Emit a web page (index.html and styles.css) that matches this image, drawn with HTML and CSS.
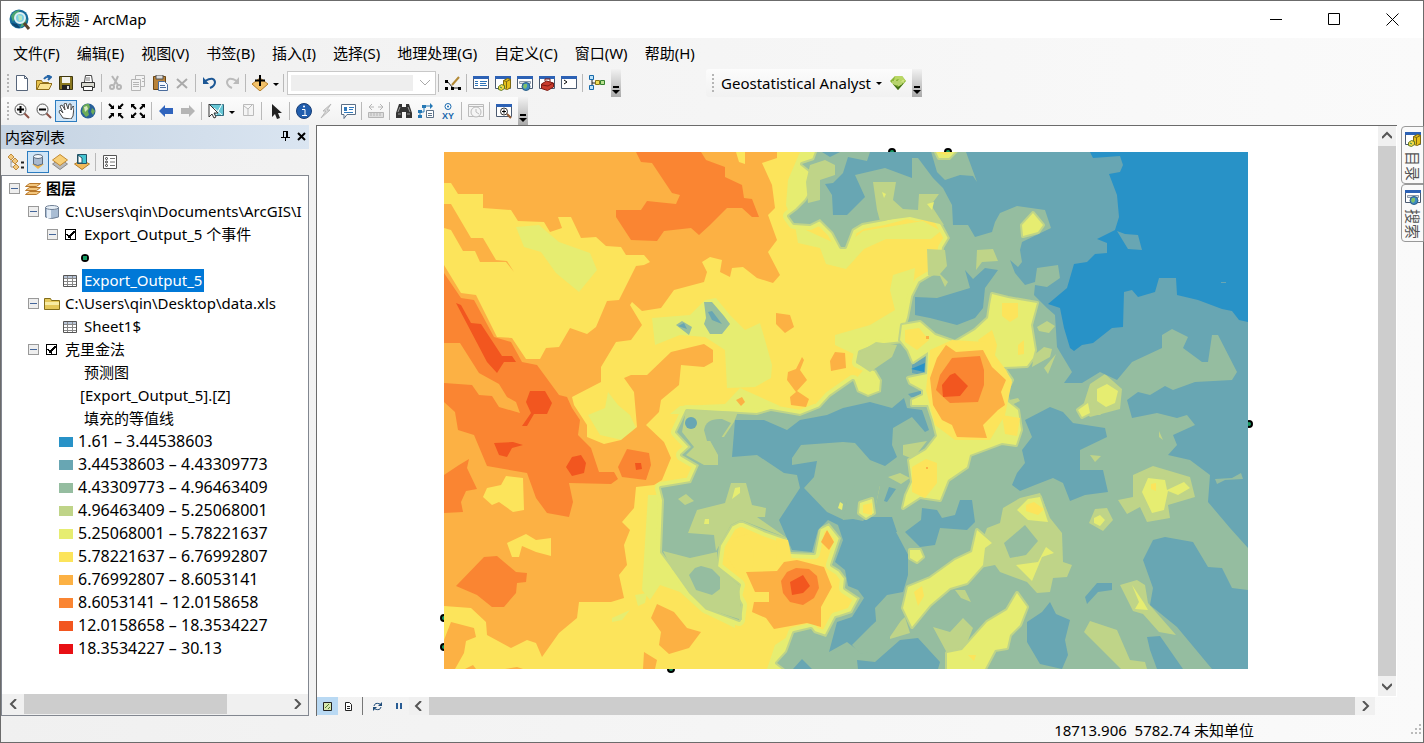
FILE: index.html
```html
<!DOCTYPE html>
<html lang="zh-CN">
<head>
    <meta charset="UTF-8">
    <meta name="viewport" content="width=device-width, initial-scale=1.0">
    <title>无标题 - ArcMap</title>
    <link rel="stylesheet" href="styles.css">
</head>
<body>
    <!-- Shared icons -->
    <svg class="defs" width="0" height="0" aria-hidden="true">
        <symbol id="i-window" viewBox="0 0 16 16">
            <path d="M.5 1.5h15v12H.5z" fill="#fff" stroke="#4b5a70"/>
            <path d="M0 1h16v3H0z" fill="#2d62b5"/>
        </symbol>
        <symbol id="i-catalog" viewBox="0 0 16 16">
            <use href="#i-window"/>
            <path d="M8.500 5.500l4-2 3 1v8l-3 2-4-1z" fill="#e5bf1a" stroke="#7d6710"/>
            <path d="M8.500 5.500l3 1 4-2M11.500 6.500v7" fill="none" stroke="#7d6710"/>
            <path d="M3.500 11.500l3-2 3 1v3l-3 2-3-1z" fill="#f2d94a" stroke="#5f7a24"/>
            <path d="M5 12l2 1" stroke="#2c8a5a"/>
        </symbol>
        <symbol id="i-search" viewBox="0 0 16 16">
            <use href="#i-window"/>
            <path d="M2.500 6.500h11v2h-11z" fill="#dde3ea" stroke="#8c98a8"/>
            <circle cx="9" cy="11.500" r="4" fill="#3d8ac2" stroke="#2c5f86"/>
            <path d="M7 9l3 0 0 3-2 2-2-2z" fill="#7fc06a"/>
        </symbol>
        <symbol id="i-layer" viewBox="0 0 16 16">
            <path d="M8 4l7 5-7 6-7-6z" fill="#f2c169" stroke="#b57d28"/>
        </symbol>
        <symbol id="i-table" viewBox="0 0 14 12">
            <path d="M.5.500h13v11H.500z" fill="#fff" stroke="#555"/>
            <path d="M1 1h12v2H1z" fill="#b8c4d6"/>
            <path d="M1 3.500h12M1 6.500h12M1 9.500h12M4.500 1v10M9.500 1v10" stroke="#888"/>
        </symbol>
        <symbol id="i-more" viewBox="0 0 10 28">
            <path d="M2 18h6" stroke="#000" stroke-width="2"/>
            <path d="M1 21h8l-4 4z"/>
        </symbol>
    </svg>

    <div class="window">
        <!-- Title bar -->
        <header class="title-bar">
            <svg class="app-icon" width="22" height="22" viewBox="0 0 22 22">
                <circle cx="10" cy="10" r="9.500" fill="#176c9c"/>
                <path d="M2 7q3-6 9-6l-2 4-3 3-2 5zM13 13l5-3-2 6-5 3z" fill="#4ba572"/>
                <path d="M2 14q4 5 9 5l-3-4z" fill="#0d4470"/>
                <circle cx="11" cy="9" r="5" fill="#7fd0e4" stroke="#dff0f3" stroke-width="2"/>
                <path d="M9 6l4 1 0 4-3 1z" fill="#b9e6c0"/>
                <path d="M15 14l5 6" stroke="#59422c" stroke-width="3"/>
            </svg>
            <h1>无标题 - ArcMap</h1>
            <div class="window-buttons">
                <button aria-label="最小化"><svg width="13" height="13" viewBox="0 0 13 13"><path d="M0 6.500h12"/></svg></button>
                <button aria-label="最大化"><svg width="13" height="13" viewBox="0 0 13 13"><path d="M.500.500h11v11H.500z"/></svg></button>
                <button aria-label="关闭"><svg width="13" height="13" viewBox="0 0 13 13"><path d="M.500.500l12 12M12.500.500l-12 12"/></svg></button>
            </div>
        </header>

        <!-- Menu -->
        <nav class="menu-bar">
            <button>文件(F)</button>
            <button>编辑(E)</button>
            <button>视图(V)</button>
            <button>书签(B)</button>
            <button>插入(I)</button>
            <button>选择(S)</button>
            <button>地理处理(G)</button>
            <button>自定义(C)</button>
            <button>窗口(W)</button>
            <button>帮助(H)</button>
        </nav>

        <!-- Toolbars -->
        <div class="toolbar-row">
            <div class="toolbar standard">
                <span class="grip"></span>
                <button class="tool" aria-label="新建"><svg viewBox="0 0 16 16"><path d="M2.500.500h8l3 3v12h-11z" fill="#fff" stroke="#56657a"/><path d="M10.500.500v3h3" fill="none" stroke="#56657a"/></svg></button>
                <button class="tool" aria-label="打开"><svg viewBox="0 0 16 16"><path d="M.500 14.500v-9h5l1 2h6v7z" fill="#e8c24c" stroke="#8e6d19"/><path d="M1 14.500l3-6h12l-3 6z" fill="#fae391" stroke="#8e6d19"/><path d="M8 4q2-3 5-2M11 0l4 2-3 3" fill="none" stroke="#2465a8" stroke-width="2"/></svg></button>
                <button class="tool" aria-label="保存"><svg viewBox="0 0 16 16"><path d="M1.500 1.500h13v13h-13z" fill="#8a7820" stroke="#40380f"/><path d="M4 2h8v6H4z" fill="#f4f4ee"/><path d="M4 10h8v5H4z" fill="#222"/><path d="M9 11h2v3H9z" fill="#ddd"/></svg></button>
                <button class="tool" aria-label="打印"><svg viewBox="0 0 16 16"><path d="M4.500 7l1-6.500h6l1 6.500" fill="#fff" stroke="#444"/><path d="M1.500 7.500h13v5h-13z" fill="#d9d9d0" stroke="#333"/><path d="M3.500 11.500h9v4h-9z" fill="#fff" stroke="#333"/><path d="M6 3h4M6 5h4" stroke="#777"/></svg></button>
                <span class="separator"></span>
                <button class="tool" aria-label="剪切" disabled><svg viewBox="0 0 16 16"><g fill="none" stroke="#b5b5b5" stroke-width="2"><path d="M4 1l6 9M10 1l-4 9"/><circle cx="4" cy="12" r="2"/><circle cx="11" cy="12" r="2"/></g></svg></button>
                <button class="tool" aria-label="复制" disabled><svg viewBox="0 0 16 16"><g fill="#f3f3f3" stroke="#b5b5b5"><path d="M5.500.500h9v11h-9z"/><path d="M1.500 4.500h9v11h-9z"/><path d="M3 7.500h6M3 9.500h6M3 11.500h6M12 3.500h2M12 6.500h2"/></g></svg></button>
                <button class="tool" aria-label="粘贴"><svg viewBox="0 0 16 16"><path d="M1.500 1.500h12v13h-12z" fill="#b98238" stroke="#6b4716"/><path d="M4 0h7v4H4z" fill="#dcdcdc" stroke="#555"/><path d="M6.500 6.500h6l3 3v6h-9z" fill="#f4f8ff" stroke="#4a6c9c"/><path d="M8 10.500h5M8 12.500h6" stroke="#4a6c9c"/></svg></button>
                <button class="tool" aria-label="删除" disabled><svg viewBox="0 0 16 16"><path d="M3 4l10 9M13 4L3 13" stroke="#aaa" stroke-width="2"/></svg></button>
                <span class="separator"></span>
                <button class="tool" aria-label="撤消"><svg viewBox="0 0 16 16"><path d="M3 6q9-5 10 1 0 4-5 6" fill="none" stroke="#1c5795" stroke-width="2"/><path d="M1 2v7h6z" fill="#1c5795"/></svg></button>
                <button class="tool" aria-label="恢复" disabled><svg viewBox="0 0 16 16"><path d="M13 6q-9-5-10 1 0 4 5 6" fill="none" stroke="#bbb" stroke-width="2"/><path d="M15 2v7H9z" fill="#bbb"/></svg></button>
                <span class="separator"></span>
                <button class="tool" aria-label="添加数据"><svg viewBox="0 0 16 16"><path d="M8 3l8 6-8 7-8-7z" fill="#f2c169" stroke="#b57d28"/><path d="M8 0v11M3 5.500h10" stroke="#000" stroke-width="2"/></svg></button>
                <button class="drop" aria-label="添加数据选项"></button>
                <span class="separator"></span>
                <select class="scale" aria-label="地图比例" disabled><option></option></select>
                <span class="separator"></span>
                <button class="tool" aria-label="编辑器"><svg viewBox="0 0 16 16"><path d="M2 6l6 7h6" fill="none" stroke="#222"/><path d="M7 10L14 2" stroke="#b38a36" stroke-width="2"/><path d="M0 5h3v3H0zM0 12h3v3H0zM6 12h3v3H6zM13 12h3v3h-3z"/></svg></button>
                <span class="separator"></span>
                <button class="tool" aria-label="内容列表"><svg viewBox="0 0 16 16"><use href="#i-window"/><path d="M2 6.500h3M2 8.500h3M2 10.500h3M7 6.500h7M7 8.500h6M7 10.500h7" stroke="#2d73b8"/></svg></button>
                <button class="tool" aria-label="目录"><svg viewBox="0 0 16 16"><use href="#i-catalog"/></svg></button>
                <button class="tool" aria-label="搜索"><svg viewBox="0 0 16 16"><use href="#i-search"/></svg></button>
                <button class="tool" aria-label="工具箱"><svg viewBox="0 0 16 16"><use href="#i-window"/><path d="M2.500 9l5-3 7 2v4l-6 3.500-6-2z" fill="#c93a2b" stroke="#7c1912"/><path d="M6 6V4h5v3M3 10l6 1 5-3" fill="none" stroke="#7c1912"/></svg></button>
                <button class="tool" aria-label="Python"><svg viewBox="0 0 16 16"><use href="#i-window"/><path d="M3 5l3 2-3 2" fill="none" stroke="#000"/></svg></button>
                <span class="separator"></span>
                <button class="tool" aria-label="模型构建器"><svg viewBox="0 0 16 16"><path d="M3 3v10M3 8h11" stroke="#222"/><g stroke-width="1"><path d="M.500.500h4v4h-4zM.500 10.500h4v4h-4z" fill="#bde3fb" stroke="#1769a8"/><path d="M6.500 5.500h4v4h-4z" fill="#f1df58" stroke="#867415"/><path d="M11.500 5.500h4v4h-4z" fill="#b8e08e" stroke="#34812d"/></g></svg></button>
                <button class="overflow" aria-label="工具栏选项"><svg viewBox="0 0 10 28"><use href="#i-more"/></svg></button>
            </div>
            <div class="toolbar analyst">
                <span class="grip"></span>
                <button class="text-tool">Geostatistical Analyst<span class="caret"></span></button>
                <button class="tool" aria-label="地统计向导"><svg viewBox="0 0 16 16"><path d="M0 6l5-5h7l4 5-8 9z" fill="#8bb63a"/><path d="M5 1h7l4 5-4 1-4-3-4 2z" fill="#b9d765"/><path d="M3 6v3M5 5v5M7 6v4M9 5v6M11 6v4M13 5v3" stroke="#e4f1a0"/><path d="M3 9l5 6 6-7-6 4z" fill="#406d18"/></svg></button>
                <button class="overflow" aria-label="工具栏选项"><svg viewBox="0 0 10 28"><use href="#i-more"/></svg></button>
            </div>
        </div>
        <div class="toolbar-row">
            <div class="toolbar">
                <span class="grip"></span>
                <button class="tool" aria-label="放大"><svg viewBox="0 0 16 16"><path d="M10 10l5 5" stroke="#8d5145" stroke-width="2"/><circle cx="6.500" cy="6.500" r="5.500" fill="#f7f7f7" stroke="#555"/><path d="M3 6.500h7M6.500 3v7" stroke="#000" stroke-width="2"/></svg></button>
                <button class="tool" aria-label="缩小"><svg viewBox="0 0 16 16"><path d="M10 10l5 5" stroke="#8d5145" stroke-width="2"/><circle cx="6.500" cy="6.500" r="5.500" fill="#f7f7f7" stroke="#555"/><path d="M3 6.500h7" stroke="#000" stroke-width="2"/></svg></button>
                <button class="tool active" aria-label="平移"><svg viewBox="0 0 16 16"><path d="M5 15L1 9l1-2 3 3-3-7 2-1 3 5-1-6 2-1 2 6 1-5 2 0 0 6 2-4 1 1-1 9-2 3z" fill="#fff" stroke="#4b4b4b"/></svg></button>
                <button class="tool" aria-label="全图"><svg viewBox="0 0 16 16"><circle cx="8" cy="8" r="7.500" fill="#28609a"/><path d="M3 3q3-3 6-2l1 3-2 4 1 4-3 2-4-5z" fill="#6cab58"/><path d="M12 5l3 3-2 4-2-3z" fill="#6cab58"/><path d="M4 4l3-1 1 3-3 3z" fill="#d7e9bd"/></svg></button>
                <span class="separator"></span>
                <button class="tool" aria-label="固定比例放大"><svg viewBox="0 0 16 16"><path d="M1 1l4 4M15 1l-4 4M1 15l4-4M15 15l-4-4" stroke="#000" stroke-width="2"/><path d="M6 2v4H2zM10 2v4h4zM6 14v-4H2zM10 14v-4h4z"/></svg></button>
                <button class="tool" aria-label="固定比例缩小"><svg viewBox="0 0 16 16"><path d="M2 2l4 4M14 2l-4 4M2 14l4-4M14 14l-4-4" stroke="#000" stroke-width="2"/><path d="M1 5V1h4zM15 5V1h-4zM1 11v4h4zM15 11v4h-4z"/></svg></button>
                <span class="separator"></span>
                <button class="tool" aria-label="返回"><svg viewBox="0 0 16 16"><path d="M1 8l6-6v3h8v6H7v3z" fill="#3064bd"/></svg></button>
                <button class="tool" aria-label="前进" disabled><svg viewBox="0 0 16 16"><path d="M15 8L9 2v3H1v6h8v3z" fill="#b5b5b5"/></svg></button>
                <span class="separator"></span>
                <button class="tool" aria-label="选择要素"><svg viewBox="0 0 16 16"><path d="M1.500 1.500h14v11h-9z" fill="#67c7d6" stroke="#31677a"/><path d="M8 12l6-11M6 5l8 7" stroke="#fff"/><path d="M1 1v13l3-3 2 4 2-1-2-4h4z" fill="#fff" stroke="#333"/></svg></button>
                <button class="drop" aria-label="选择选项"></button>
                <button class="tool" aria-label="清除选择" disabled><svg viewBox="0 0 16 16"><path d="M3.500 1.500h10v11h-10zM4 3l4 3 4-4M8 6v6" fill="#f4f4f4" stroke="#bbb"/></svg></button>
                <span class="separator"></span>
                <button class="tool" aria-label="选择元素"><svg viewBox="0 0 16 16"><path d="M4 1v13l3-3 2 5 3-1-2-5h4z" fill="#222"/></svg></button>
                <span class="separator"></span>
                <button class="tool" aria-label="识别"><svg viewBox="0 0 16 16"><circle cx="8" cy="8" r="7.500" fill="#215eae" stroke="#173d75"/><path d="M6 6.500h3V12M6 12.500h5" fill="none" stroke="#fff"/><circle cx="8" cy="3.500" r="1" fill="#fff"/></svg></button>
                <button class="tool" aria-label="超链接" disabled><svg viewBox="0 0 16 16"><path d="M13 1L5 8l3 0-5 7 9-8H9z" fill="#ddd" stroke="#b8b8b8"/></svg></button>
                <button class="tool" aria-label="HTML 弹出窗口"><svg viewBox="0 0 16 16"><path d="M1.500 1.500h14v10H7l-3 4v-4H1.500z" fill="#fff" stroke="#5a6f87"/><path d="M4 4h3v4H4z" fill="#3079bd"/><path d="M9 4.500h5M9 6.500h4M4 9.500h9" stroke="#3079bd"/></svg></button>
                <span class="separator"></span>
                <button class="tool" aria-label="测量" disabled><svg viewBox="0 0 16 16"><path d="M1 4h5M10 4h5M4 1L1 4l3 3M12 1l3 3-3 3" fill="none" stroke="#b5b5b5"/><path d="M.500 9.500h15v5H.500zM3 10v3M6 10v3M9 10v3M12 10v3" fill="#ddd" stroke="#b5b5b5"/></svg></button>
                <span class="separator"></span>
                <button class="tool" aria-label="查找"><svg viewBox="0 0 16 16"><path d="M3 1h3v3h4V1h3l3 9v5h-6V9H6v6H0v-5z" fill="#343434"/><path d="M2 11h3M11 11h3M4 4l-2 5M12 4l2 5" stroke="#999"/></svg></button>
                <button class="tool" aria-label="查找路径"><svg viewBox="0 0 16 16"><path d="M2 14V9h4V3h8" fill="none" stroke="#2578b5" stroke-width="1"/><path d="M12 0l3 3-3 3M0 12h4v3H0zM0 7h4v3H0zM4 2h4v3H4z" fill="#2578b5"/><path d="M8.500 7.500h7v7h-7z" fill="#fff" stroke="#5c7187"/><path d="M10 10.500h4M10 12.500h4" stroke="#5c7187"/></svg></button>
                <button class="tool" aria-label="转到 XY"><svg viewBox="0 0 16 16"><circle cx="8" cy="3.500" r="3" fill="#fff" stroke="#1767ad"/><circle cx="8" cy="3.500" r="1" fill="#1767ad"/><text class="xy" x="8" y="16">XY</text></svg></button>
                <span class="separator"></span>
                <button class="tool" aria-label="时间滑块" disabled><svg viewBox="0 0 16 16"><g fill="#f5f5f5" stroke="#bbb"><path d="M.500 1.500h15v12H.500zM1 3.500h14"/><circle cx="8" cy="9" r="5"/><path d="M8 6v3l3 2"/></g></svg></button>
                <span class="separator"></span>
                <button class="tool" aria-label="创建查看器窗口"><svg viewBox="0 0 16 16"><use href="#i-window"/><path d="M11 11l4 4" stroke="#915a35" stroke-width="2"/><circle cx="8" cy="8.500" r="3.500" fill="#fff" stroke="#333"/><path d="M6 8.500h4M8 6.500v4" stroke="#000"/></svg></button>
                <button class="overflow" aria-label="工具栏选项"><svg viewBox="0 0 10 28"><use href="#i-more"/></svg></button>
            </div>
        </div>

        <div class="workspace">
            <!-- Table of contents -->
            <aside class="toc">
                <div class="toc-header">
                    <h2>内容列表</h2>
                    <button aria-label="自动隐藏"><svg width="9" height="10" viewBox="0 0 9 10"><path d="M2.500 0v6M2 .500h4M5.500 0v6M6.500 0v6M0 6.500h9M4.500 7v3" stroke="#000" fill="none"/></svg></button>
                    <button aria-label="关闭"><svg width="9" height="9" viewBox="0 0 9 9"><path d="M1 1l7 7M8 1L1 8" stroke="#000" stroke-width="2"/></svg></button>
                </div>
                <div class="toc-tools">
                    <button class="tool" aria-label="按绘制顺序列出"><svg viewBox="0 0 16 16"><path d="M3 4v9h4M3 8h4" fill="none" stroke="#999"/><path d="M0 3l3-3 3 3-3 3zM4 7l3-3 3 3-3 3zM5 13l3-3 3 3-3 3z" fill="#f2c97f" stroke="#c08b3c"/><path d="M13 8.500h3M13 13.500h3" stroke="#222" stroke-width="2"/></svg></button>
                    <button class="tool active" aria-label="按源列出"><svg viewBox="0 0 16 16"><path d="M8 15l-6-5h12z" fill="#edb74f"/><path d="M3.500 2v8q4 3 9 0V2" fill="#a8bad0" stroke="#5d6d80"/><ellipse cx="8" cy="2.500" rx="4.500" ry="2" fill="#f5f8fb" stroke="#5d6d80"/></svg></button>
                    <button class="tool" aria-label="按可见性列出"><svg viewBox="0 0 16 16"><path d="M8 5l7.500 5L8 15.500.500 10z" fill="#b9b9b9" stroke="#888"/><path d="M8 .500L15.500 6 8 11.500.500 6z" fill="#f7cf78" stroke="#c3892f"/></svg></button>
                    <button class="tool" aria-label="按选择列出"><svg viewBox="0 0 16 16"><path d="M8 6l7.500 4L8 15.500.500 10z" fill="#f2b95a" stroke="#b57d28"/><path d="M3.500.500h9v9h-9z" fill="#45c4d1" stroke="#235367"/><path d="M4 1l4 3 0 5H4z" fill="#fff" stroke="#235367"/></svg></button>
                    <span class="separator"></span>
                    <button class="tool" aria-label="选项"><svg viewBox="0 0 16 16"><path d="M1.500 1.500h13v13h-13z" fill="#fff" stroke="#555"/><g fill="none" stroke="#333"><circle cx="4.500" cy="4.500" r="1"/><circle cx="4.500" cy="8" r="1"/><circle cx="4.500" cy="11.500" r="1"/></g><path d="M8 4.500h5M8 8h5M8 11.500h5" stroke="#777"/></svg></button>
                </div>
                <div class="toc-box">
                    <ul class="tree">
                        <li class="level-0"><button class="toggle" aria-label="折叠"></button><svg class="node-icon" viewBox="0 0 16 14"><g fill="#f3c67d" stroke="#b8782b"><path d="M.500 12.500l4-3h11l-4 3z"/><path d="M.500 8.500l4-3h11l-4 3z"/><path d="M.500 4.500l4-3h11l-4 3z"/></g></svg><strong>图层</strong></li>
                        <li class="level-1"><button class="toggle" aria-label="折叠"></button><svg class="node-icon" viewBox="0 0 16 14"><path d="M1.500 2v10q6 3 13 0V2" fill="#a9bdd4" stroke="#718196"/><path d="M3 3h4v10H3z" fill="#e4edf7"/><ellipse cx="8" cy="2.500" rx="6.500" ry="2" fill="#e6eef6" stroke="#718196"/></svg><span>C:\Users\qin\Documents\ArcGIS\I</span></li>
                        <li class="level-2"><button class="toggle" aria-label="折叠"></button><input type="checkbox" id="layer-events" checked><label for="layer-events">Export_Output_5 个事件</label></li>
                        <li class="symbol"><svg width="10" height="10" viewBox="0 0 10 10"><circle cx="5" cy="5" r="4"/><path d="M3 3h4v4H3z" fill="#169b62"/></svg></li>
                        <li class="table-node"><svg viewBox="0 0 14 12"><use href="#i-table"/></svg><span class="selected">Export_Output_5</span></li>
                        <li class="level-1"><button class="toggle" aria-label="折叠"></button><svg class="node-icon" viewBox="0 0 16 14"><path d="M.500 12.500V1.500h6l1 2h8v9z" fill="#e5c85a" stroke="#826d1b"/><path d="M1 5h14v3H1z" fill="#f8eca4"/></svg><span>C:\Users\qin\Desktop\data.xls</span></li>
                        <li class="table-node"><svg viewBox="0 0 14 12"><use href="#i-table"/></svg><span>Sheet1$</span></li>
                        <li class="level-1"><button class="toggle" aria-label="折叠"></button><input type="checkbox" id="layer-kriging" checked><label for="layer-kriging">克里金法</label></li>
                        <li class="caption">预测图</li>
                        <li class="caption field">[Export_Output_5].[Z]</li>
                        <li class="caption">填充的等值线</li>
                        <li class="legend"><i class="swatch c1"></i>1.61 – 3.44538603</li>
                        <li class="legend"><i class="swatch c2"></i>3.44538603 – 4.43309773</li>
                        <li class="legend"><i class="swatch c3"></i>4.43309773 – 4.96463409</li>
                        <li class="legend"><i class="swatch c4"></i>4.96463409 – 5.25068001</li>
                        <li class="legend"><i class="swatch c5"></i>5.25068001 – 5.78221637</li>
                        <li class="legend"><i class="swatch c6"></i>5.78221637 – 6.76992807</li>
                        <li class="legend"><i class="swatch c7"></i>6.76992807 – 8.6053141</li>
                        <li class="legend"><i class="swatch c8"></i>8.6053141 – 12.0158658</li>
                        <li class="legend"><i class="swatch c9"></i>12.0158658 – 18.3534227</li>
                        <li class="legend"><i class="swatch c10"></i>18.3534227 – 30.13</li>
                    </ul>
                    <div class="scrollbar horizontal">
                        <button aria-label="向左"><svg viewBox="0 0 10 10"><path d="M7 0L2 5l5 5"/></svg></button>
                        <div class="track"><div class="thumb toc-thumb"></div></div>
                        <button aria-label="向右"><svg viewBox="0 0 10 10"><path d="M3 0l5 5-5 5"/></svg></button>
                    </div>
                </div>
            </aside>

            <!-- Map view -->
            <main class="map-pane">
                <div class="map-row">
                    <div class="map-view">
                        <svg viewBox="317 126 1059 570" role="img" aria-label="预测图">
                            <!-- sample points that show past the surface -->
                            <g class="points">
                                <circle cx="892" cy="152" r="3"/>
                                <circle cx="948" cy="152" r="3"/>
                                <circle cx="1249" cy="424" r="3"/>
                                <circle cx="444" cy="618" r="3"/>
                                <circle cx="444" cy="647" r="3"/>
                                <circle cx="671" cy="669" r="3"/>
                            </g>
                            <svg x="444" y="152" width="804" height="517" viewBox="444 152 804 517">
                                <path class="k6" d="M444 152h804v517H444z"/>

                                <!-- 5.25 - 5.78, inside the yellow zone -->
                                <g class="k5">
                                    <path d="M652 318L690 315 705 300 716 298 730 315 745 330 760 323 765 340 772 365 771 378 755 387 727 388 725 350 705 337 680 335 655 345z"/>
                                    <path d="M893 275L915 268 909 330 903 345 860 357 835 345 835 335 870 325 895 310 890 290z"/>
                                    <path d="M800 152h20l-5 48-25 15-4-10 2-25z"/>
                                    <path d="M795 225l48 22 20-16 60-10 18 10-10 8-45 0-22 10-18 20-20-5-6-16-22-5z"/>
                                    <path d="M588 415L605 408 608 392 618 405 630 415 636 428 622 440 600 435z"/>
                                    <path d="M648 495L662 495 664 552 680 575 700 600 735 622 735 628 702 612 680 592 660 585 650 600 642 590z"/>
                                    <path d="M612 618l18-8-8 10-10 2zM635 595l12-2-2 10-7 3zM775 645l15-10 4 34h-27z"/>
                                    <path d="M855 380L870 362 884 375 882 398 860 398zM740 388l40 18-50 8-60 0 10-8 45-2z"/>
                                </g>

                                <!-- Cool zone with its edge bands -->
                                <path id="cool" class="k3" d="M817 152L814 160 802 164 812 172 818 182 806 201 797 210 789 216 794 223 810 224 820 219 833 232 841 247 845 247 852 229 862 223 884 219 907 213 918 215 928 203 937 215 943 225 950 238 944 248 940 272 930 277 920 283 913 297 909 318 905 330 904 343 875 346 860 352 858 362 876 370 882 380 881 392 868 397 857 392 853 381 830 397 820 408 800 416 771 411 757 415 687 411 677 432 691 447 682 455 699 465 691 483 661 488 664 500 662 552 674 568 687 562 681 575 691 592 707 608 739 620 741 605 736 596 739 585 716 567 719 545 731 525 741 520 764 530 787 538 791 552 814 553 819 528 829 523 841 538 832 565 840 570 846 578 845 588 860 598 852 613 840 617 836 618 826 637 814 633 811 629 794 633 787 652 777 663 785 669 785 680 1258 680V142H817z"/>
                                <use class="band-outer" href="#cool"/>
                                <use class="band-inner" href="#cool"/>

                                <!-- 4.96 - 5.25 -->
                                <g class="k4">
                                    <path d="M810 165L825 160 835 165 835 175 820 180 820 200 808 203 806 182z"/>
                                    <path d="M873 182h23l-3 18 10 9 15 1 1-16h20l-8 11 13 20-34-8-30 4-3-11z"/>
                                    <path d="M927 249l18 1 2 16-7 8 8 8-3 5-5-11-12-1z"/>
                                    <path d="M858 353l18-11 21 3-5 12-22 15-12-8z"/>
                                    <path d="M686 410l52 2-4 10-10 15-16 0 10 18v10l-14 0-18-10 8-8-12-15z"/>
                                    <path d="M688 533L697 510 725 503 731 483 746 483 752 505 766 508 765 517 757 517 787 538 741 520 731 525 716 551 714 535z"/>
                                    <path d="M663 551L690 558 717 552 718 567 739 585 742 620 707 609 689 593 672 569z"/>
                                    <path d="M1133 475L1153 466 1190 477 1195 497 1168 505 1170 518 1147 522 1140 507 1127 514 1118 500 1133 497z"/>
                                    <path d="M1095 509l12-1 6 12-10 11-14-8z"/>
                                    <path d="M1003 508L1020 498 1040 493 1050 518 1062 533 1063 562 1072 565 1067 577 1053 578 1050 592 1037 593 1027 582 1000 572 995 565 980 568 975 560 987 528 1000 523z"/>
                                    <path d="M933 627l17 5 13-14 10 10-8 20-18 5zM905 617l-15 14v8l20-6zM955 590l10 0 6 12-10-4zM903 445l24-4-14 18-10-4z"/>
                                    <path d="M1090 621l27 9 13 30 15 2 2 7-26 0-25-25-12-12z"/>
                                    <path d="M1120 585l17-5 8 5 3 18 28 32-17-3-16-18-10-3z"/>
                                    <path d="M1090 384l15-10 17 15-2 20-30 8-8-8zM1056 354l-8 20-4-6zM1037 327l10-6 8 5-6 7-10-2zM1034 355l10-8 8 2-2 8-18 10z"/>
                                    <path d="M1018 152h9v8zM977 250l16-1 5 12-16 1-6 8zM888 477l12-4 10 5-9 6zM678 499l8-5 8 7-9 4zM863 490l17-4-4 18-14 4zM1007 407l13-6-2-3-13 3zM1080 415l30-8-10 8zM1090 455l11 1-6 6zM1159 431l4 9-4-3z"/>
                                </g>

                                <!-- 4.43 - 4.96, lakes inside the olive bands -->
                                <g class="k3">
                                    <path d="M704 430q2-12 18-11l9 4-12 18-12 0z"/>
                                    <path d="M689 575L695 568 701 566 712 569 720 577 720 589 712 595 696 590z"/>
                                    <path d="M1004 543L1025 525 1038 541 1026 555 1010 558z"/>
                                    <path d="M704 302l8 0 12 14 6 8-8 10-12 0-6-10 2-6zM676 325l6-4 10 6-3 8z"/>
                                </g>

                                <!-- 3.45 - 4.43 -->
                                <g class="k2">
                                    <path d="M848 157L867 161 870 152H1248V548L1230 528 1208 502 1210 475 1190 460 1168 455 1177 445 1173 435 1195 425 1187 415 1177 418 1157 413 1132 418 1127 400 1138 392 1150 395 1165 386 1173 390 1195 382 1232 380 1237 372 1218 335 1212 335 1208 362 1202 362 1183 348 1188 337 1172 329 1162 335 1162 348 1132 362 1117 380 1100 372 1082 383 1064 383 1072 372 1057 347 1055 315 1047 308 1034 295 1035 285 1047 287 1060 278 1058 265 1037 268 1035 282 1025 285 1015 273 1010 260 1018 267 1022 262 1020 250 1022 242 1051 228 1045 210 1017 206 1000 213 995 222 992 232 975 237 968 225 953 225 952 205 943 188 933 178 918 158 912 158 912 178 885 168 855 175 865 197 847 215 833 215 832 195 825 184 833 183 843 173z"/>
                                    <path d="M915 297L937 298 970 288 965 270 973 279 985 268 998 270 985 288 983 308 975 318 957 325 930 318 915 315z"/>
                                    <path d="M735 420L764 420 787 430 800 420 827 415 843 408 870 402 892 408 904 398 907 408 922 410 929 430 925 432 912 417 893 428 892 445 897 457 885 466 870 460 855 443 843 442 801 445 792 458 792 465 817 461 814 477 804 488 827 512 844 520 847 502 852 517 892 517 897 532 908 545 908 575 903 592 887 595 875 608 877 632 860 652 847 642 829 652 837 622 852 617 864 598 858 590 848 586 845 570 835 562 843 540 838 525 828 520 818 530 812 552 792 550 779 520 800 488 797 475 784 473 757 455 732 457z"/>
                                    <path d="M857 660L875 662 900 640 918 638 940 662 938 669 858 669z"/>
                                    <path d="M1025 420L1050 407 1063 412 1073 423 1105 428 1107 437 1080 450 1080 470 1103 470 1108 492 1085 495 1070 501 1063 483 1053 478 1035 485 1020 491 1012 485 1017 473 1025 463 1022 450 1032 437z"/>
                                    <path d="M922 508L937 510 942 518 955 515 960 500 972 500 975 522 967 530 940 528 935 545 920 547 905 532 921 520z"/>
                                    <path d="M1153 540L1165 537 1193 542 1208 567 1222 568 1232 588 1248 590V669H1212L1177 627 1150 605 1153 588 1143 560z"/>
                                    <path d="M1147 637L1160 636 1183 669H1157L1150 650z"/>
                                    <path d="M1050 602L1056 614 1070 620 1065 640 1068 655 1062 669 1040 664 1027 642 1027 622 1042 612z"/>
                                    <path d="M1097 583h15v7l-14 2-11 12-2-7zM884 501l5-14 7 2-9 13zM793 669l9-10 10 10zM822 152h18l-10 5zM912 365l14-9v20l-14-3zM908 394l16-4 1 8-14-1z"/>
                                    <circle cx="691" cy="423" r="6"/>
                                    <path d="M708 312l4-1 10 13-10-4zM678 326l6-3 3 6z"/>
                                </g>
                                <g class="k3">
                                    <path d="M930 148L937 172 945 180 960 175 973 176 977 182 966 152z"/>
                                    <path d="M1215 479l17-1 9-5 2 6-18 1-8 4z"/>
                                    <path d="M843 520l4-20 8-15 25 0-5 24-12 12-10-2z"/>
                                    <path d="M852 645l20-20 30-28 12 4-20 30-14 20-20 3zM896 532l8 0 12 14 12 6-3 12-12 0z"/>
                                </g>

                                <!-- Warm islands inside the cool zone -->
                                <g class="island">
                                    <path d="M992 294L1008 298 1037 303 1031 325 1035 350 1033 358 1027 366 1003 367 1012 380 1006 392 1008 402 1018 410 1021 430 1016 445 1002 443 970 455 967 467 948 480 940 500 920 497 903 508 906 495 912 482 909 460 926 450 937 436 933 420 928 405 912 405 912 400 923 395 923 390 910 383 908 378 927 374 928 352 913 362 908 350 900 340 902 325 920 322 935 335 955 342 975 330 988 318 990 305z"/>
                                    <path d="M1022 225L1033 213 1043 225 1038 232 1023 236z"/>
                                    <path d="M1097 389L1107 384 1118 391 1115 403 1106 407 1097 401zM1078 410l10-7 2 10-8 4z"/>
                                    <path d="M977 530L992 543 985 548 983 565 967 583 950 588 930 605 912 627 903 608 908 587 930 578 955 560 972 552z"/>
                                    <path d="M1017 593L1027 607 1020 625 1010 635 1007 648 995 650 985 669 947 669 947 653 962 650 987 622 1007 610z"/>
                                    <path d="M1017 510L1028 499 1040 497 1048 522 1028 520z"/>
                                    <path d="M1142 492L1148 478 1165 480 1167 490 1184 482 1190 488 1178 495 1168 491 1164 510 1152 513z"/>
                                    <path d="M860 503l12-4 2 14-8 5-7-5zM910 550l10 0 3 7-6 5-7-4zM935 150h22l-8 8h-10zM1094 518l6-3 5 5-5 6-6-3z"/>
                                </g>
                                <g class="k5">
                                    <path d="M1016 565l22-3 8-15 8 6-12 4-10 24zM1132 585l12 18 4 7-13-1 4-7zM735 488l5-1 0 6-8 6zM705 519l4 0 0 5-5 0zM882 192l4 2-2 4zM840 502l3 2-1 6-4-2zM1183 648l3 0zM927 204l7-2-2 8z"/>
                                </g>
                                <g class="k6">
                                    <path d="M1002 303h16v14l-8 5-8-6zM978 340l14-10 5 15-3 15-10-8zM1018 345l6-5 0 14-6 1zM905 330l14-2 10 12-12 10-12-8zM912 467l14-8 11 4 0 20-12 15-13-6zM1002 415l18 3-3 18-12-2zM863 505l9-2 0 12-9-2zM914 592l8-6 2 10-6 10zM1026 505l8-3 10 7-6 6-12-4zM1151 484l5-1v8l-5-2zM936 152h16l-6 3zM968 655l8 0-2 6z"/>
                                    <path d="M930 350L952 340 985 342 1006 370 1012 382 1008 400 1005 415 990 440 955 440 935 425 926 390z"/>
                                    <path d="M734 538l14-4 6 20-2 20-15-2-10-15zM776 538l12 2 4 20-15 0z"/>
                                </g>

                                <!-- 6.77 - 8.61 -->
                                <g class="k7">
                                    <path d="M444 152L777 152 777 158 762 163 772 185 775 208 768 215 777 240 768 252 780 275 773 283 757 278 743 267 732 268 730 277 720 272 722 260 710 257 702 262 707 272 704 282 674 290 661 308 642 311 632 302 630 305 642 325 631 340 616 342 601 367 601 382 572 397 574 405 587 425 587 437 604 444 621 440 637 427 634 392 624 378 631 375 647 375 671 352 704 344 713 350 713 362 704 367 681 365 679 385 661 400 659 412 646 425 664 442 671 458 662 480 654 485 636 487 634 508 622 522 630 530 624 545 627 565 619 575 624 598 611 602 579 602 577 618 559 633 542 657 536 643 527 640 511 648 487 635 486 622 471 608 444 606z"/>
                                    <path d="M451 622L474 628 476 637 466 641 464 653 455 669H444V640z"/>
                                    <path d="M651 618L657 604 674 612 687 628 701 632 689 648 669 654 659 645 661 632zM644 652l13 8-2 9h-12zM465 669l8-4 3 4zM505 669l12-2 6 2z"/>
                                    <path d="M746 572L777 571 784 562 797 560 824 567 832 587 821 607 821 627 807 623 774 629 766 618 752 612 754 602 769 602V592H755z"/>
                                    <path d="M827 530l7 12-5 8-8-8zM776 313l14 2 4 12-9 6-9-9zM802 357l2 3-4 10 7 10-10 11 12 8-3 8-15-2-1-8 6-5-9-12 1-8 8-3zM835 352l10 1 1 15-15 3-1-10zM736 400l6-3 3 5-4 4z"/>
                                    <path d="M937 358L946 345 956 352 983 350 992 367 1006 380 1001 392 1005 405 998 410 983 425 987 438 957 437 952 425 942 420 933 405 930 378z"/>
                                    <path d="M926 336h3v3h-3zM926 467h2v2h-2z"/>
                                </g>
                                <g class="k6">
                                    <path d="M444 183L451 183 458 194 483 194 483 208 511 210 518 221 544 222 550 232 562 228 558 217 571 217 581 238 596 237 606 246 621 247 626 255 644 255 650 262 644 265 636 266 619 300 607 301 596 327 587 334 570 328 559 347 546 348 540 359 526 359 512 338 497 337 476 295 461 293 444 265z"/>
                                    <path d="M483 497L487 488 501 485 506 476 523 478 524 510 513 512 499 502 492 505zM507 543L526 534 536 540 551 538 551 556 536 552 522 546 519 557 512 557zM736 152h9v12l-6-2z"/>
                                </g>
                                <path class="k7" d="M444 204L451 204 471 238 483 238 496 260 507 261 514 272 506 262 480 262 475 251 463 251 451 230 444 228z"/>
                                <path class="k5" d="M516 227L539 225 559 242 590 253 597 270 579 292 556 273 541 252 524 247z"/>

                                <!-- 8.61 - 12.02 -->
                                <g class="k8">
                                    <path d="M636 152H701L706 160 725 167 725 177 742 185 744 198 752 199 759 217 752 217 742 208 727 208 710 225 699 235 691 228 664 231 657 241 631 240 616 217V210H641L647 201 676 204 680 195 672 193 652 163 641 162z"/>
                                    <path d="M444 273L461 298 474 300 494 337 511 342 522 362 537 365 559 395 567 397 572 408 580 420 578 435 591 448 599 472 614 472 618 479 611 484 569 483 573 502 569 517 547 513 536 498 527 473 487 466 474 435 458 430 455 412 444 402z"/>
                                    <path d="M444 475L459 465 469 459 467 468 477 489 466 491 461 502 463 512 444 513z"/>
                                    <path d="M456 586L484 557 497 556 516 572 527 573 526 582 517 583 516 593 504 607H492L477 595z"/>
                                    <path d="M627 449L649 453 651 465 646 480 622 477 618 467z"/>
                                    <path d="M952 358L980 356 984 370 984 385 978 402 950 403 941 395 936 390 940 375z"/>
                                    <path d="M796 568L809 569 817 576 819 588 814 598 803 605 790 602 783 593 781 581 787 572z"/>
                                </g>
                                <path class="k7" d="M444 343L460 343 479 373 499 384 507 397 516 402 520 413 499 407 492 396 479 395 472 385 444 383z"/>

                                <!-- 12.02 - 18.35 -->
                                <g class="k9">
                                    <path d="M456 303L461 305 471 323 481 324 502 356 512 356 516 362 504 362 497 373 487 362z"/>
                                    <path d="M526 402L530 391H545L552 403 547 414H534L527 426 522 426 531 413z"/>
                                    <path d="M494 443L513 442 523 445 512 448 507 457 499 455zM566 467L572 457 581 455 586 463 584 473 572 476zM635 463l6 0 1 6-6 1z"/>
                                    <path d="M942 385L950 375 955 373 968 386 960 396 943 397zM790 582L803 575 810 586 803 593 792 595z"/>
                                </g>

                                <!-- 1.61 - 3.45 -->
                                <g class="k1">
                                    <path d="M1090 152L1093 158 1120 156 1123 165 1120 172 1109 174 1117 195 1119 217 1115 230 1097 239 1107 243 1107 253 1095 254 1087 262 1074 264 1067 288 1048 304 1060 308 1064 328 1070 348 1074 351 1082 345 1093 343 1112 328 1123 327 1124 292 1132 290 1138 297 1155 292 1159 278H1176L1177 295 1198 300 1222 309 1232 311 1239 320 1248 322V152z"/>
                                    <path d="M911 369l14-6-1 9z"/>
                                </g>
                                <path class="k2" d="M1117 231L1125 234 1138 235 1142 250 1128 249zM1221 282h5v1h-5z"/>
                            </svg>
                        </svg>
                    </div>
                    <div class="scrollbar vertical">
                        <button aria-label="向上"><svg viewBox="0 0 10 10"><path d="M0 7l5-5 5 5"/></svg></button>
                        <div class="track"><div class="thumb"></div></div>
                        <button aria-label="向下"><svg viewBox="0 0 10 10"><path d="M0 3l5 5 5-5"/></svg></button>
                    </div>
                </div>
                <div class="map-footer">
                    <button class="view-button current" aria-label="数据视图"><svg viewBox="0 0 9 9"><path d="M.500.500h8v8h-8z" fill="#d8e8b0" stroke="#222"/><path d="M2 6l4-4M5 7l2-2" stroke="#55802d"/></svg></button>
                    <button class="view-button" aria-label="布局视图"><svg viewBox="0 0 9 9"><path d="M1.500.500h4l2 2v6h-6z" fill="#fff" stroke="#222"/><path d="M3 4.500h3M3 6.500h3" stroke="#222"/></svg></button>
                    <span class="footer-line"></span>
                    <button class="view-button" aria-label="刷新"><svg viewBox="0 0 9 9"><path d="M1 4q1-4 6-2M8 5q-1 4-6 2" fill="none" stroke="#204c79"/><path d="M9 0v4H5zM0 9V5h4z" fill="#204c79"/></svg></button>
                    <button class="view-button" aria-label="暂停"><svg viewBox="0 0 9 9"><path d="M3 1v6M7 1v6" stroke="#285c94" stroke-width="2"/></svg></button>
                    <div class="scrollbar horizontal">
                        <button aria-label="向左"><svg viewBox="0 0 10 10"><path d="M7 0L2 5l5 5"/></svg></button>
                        <div class="track"><div class="thumb"></div></div>
                        <button aria-label="向右"><svg viewBox="0 0 10 10"><path d="M3 0l5 5-5 5"/></svg></button>
                    </div>
                </div>
            </main>

            <!-- Docked tabs -->
            <aside class="dock">
                <button><svg viewBox="0 0 16 16"><use href="#i-catalog"/></svg>目录</button>
                <button><svg viewBox="0 0 16 16"><use href="#i-search"/></svg>搜索</button>
            </aside>
        </div>

        <footer class="status-bar">
            <span>18713.906&nbsp; 5782.74 未知单位</span>
            <svg width="12" height="12" viewBox="0 0 12 12"><path d="M9 1h2v2H9zM5 5h2v2H5zM9 5h2v2H9zM1 9h2v2H1zM5 9h2v2H5zM9 9h2v2H9z" fill="#bbb"/></svg>
        </footer>
    </div>
</body>
</html>
```
FILE: styles.css
```css
* {
    margin: 0;
    padding: 0;
    box-sizing: border-box;
}

body {
    height: 100vh;
    font-family: "Noto Sans", "Noto Sans CJK SC", sans-serif;
    font-size: 15px;
    color: #000;
    background-color: #f0f0f0;
    overflow: hidden;
}

button {
    font: inherit;
    color: inherit;
    background: none;
    border: none;
}

svg {
    display: block;
    flex: none;
}

.defs {
    position: absolute;
}

.window {
    display: flex;
    flex-direction: column;
    height: 100vh;
    border: 1px solid #6b6b6b;
    background: linear-gradient(to right, #f0f0f0, #fafafa);
}

/* Title bar */
.title-bar {
    display: flex;
    align-items: center;
    height: 37px;
    padding-left: 8px;
    background-color: #fff;
}

.title-bar h1 {
    margin-left: 4px;
    padding-bottom: 2px;
    font-size: 15px;
    font-weight: normal;
}

.window-buttons {
    display: flex;
    height: 100%;
    margin-left: auto;
    padding-right: 2px;
}

.window-buttons button {
    display: flex;
    align-items: center;
    justify-content: center;
    width: 58px;
}

.window-buttons path {
    fill: none;
    stroke: #000;
}

/* Menu */
.menu-bar {
    display: flex;
    align-items: center;
    gap: 17px;
    height: 31px;
    padding: 0 0 2px 12px;
}

/* Toolbars */
.toolbar-row {
    display: flex;
    height: 28px;
}

.toolbar {
    display: flex;
    align-items: center;
    padding-left: 6px;
    background: linear-gradient(#fcfcfc, #f1f1f1);
    border-radius: 3px;
}

.standard {
    width: 705px;
    background: none;
}

.grip {
    width: 4px;
    height: 18px;
    border-left: 2px dotted #b5b5b5;
}

.tool {
    display: flex;
    align-items: center;
    justify-content: center;
    width: 22px;
    height: 22px;
    border: 1px solid transparent;
}

.tool svg {
    width: 16px;
    height: 16px;
}

.tool.active {
    background-color: #cfe5f7;
    border-color: #2c7cc0;
}

.xy {
    font-family: "Liberation Sans", sans-serif;
    font-size: 9px;
    font-weight: bold;
    text-anchor: middle;
    fill: #1767ad;
}

.separator {
    width: 1px;
    height: 18px;
    margin: 0 3px 0 2px;
    background-color: #b9b9b9;
}

.drop {
    width: 10px;
    height: 22px;
}

.drop::before,
.caret {
    content: "";
    display: inline-block;
    border: 3px solid transparent;
    border-top-color: #000;
    border-bottom: none;
    vertical-align: middle;
}

.scale {
    width: 149px;
    height: 24px;
    appearance: none;
    border: 1px solid #c8c8c8;
    background-color: #fff;
    background-image: url("data:image/svg+xml,%3Csvg xmlns='http://www.w3.org/2000/svg' width='10' height='6'%3E%3Cpath d='M0 0l5 5 5-5' fill='none' stroke='%23aaa'/%3E%3C/svg%3E"), linear-gradient(#eee, #eee);
    background-position: right 5px center, 3px 3px;
    background-size: 10px 6px, 122px 16px;
    background-repeat: no-repeat;
    opacity: 1;
}

.overflow {
    width: 10px;
    height: 28px;
    margin-left: 3px;
    background: linear-gradient(#f2f2f2, #aaa);
}

.overflow svg {
    width: 10px;
    height: 28px;
}

.text-tool {
    display: flex;
    align-items: center;
    gap: 5px;
    padding: 0 5px;
}

/* Workspace */
.workspace {
    flex: 1;
    display: flex;
    min-height: 0;
}

.toc {
    display: flex;
    flex-direction: column;
    width: 308px;
}

.toc-header {
    display: flex;
    align-items: center;
    gap: 7px;
    height: 24px;
    padding: 0 3px 2px 4px;
    background: linear-gradient(to right, #c5d3e2, #dae5f1);
}

.toc-header h2 {
    margin-right: auto;
    font-size: 15px;
    font-weight: normal;
}

.toc-tools {
    display: flex;
    align-items: center;
    height: 26px;
    padding-left: 4px;
}

.toc-box {
    flex: 1;
    display: flex;
    flex-direction: column;
    min-height: 0;
    border: 1px solid #828790;
    background-color: #fff;
}

.tree {
    flex: 1;
    padding-top: 1px;
    overflow: hidden;
    list-style: none;
    line-height: 23px;
    white-space: nowrap;
}

.tree li {
    display: flex;
    align-items: center;
    height: 23px;
}

.tree .level-0 {
    padding-left: 7px;
}

.tree .level-1 {
    padding-left: 26px;
}

.tree .level-2 {
    padding-left: 45px;
}

.toggle {
    flex: none;
    width: 11px;
    height: 11px;
    margin-right: 5px;
    border: 1px solid #999;
    background: linear-gradient(#44669a, #44669a) center / 7px 1px no-repeat #eee;
}

.node-icon {
    width: 16px;
    height: 14px;
    margin-right: 5px;
}

.tree input {
    flex: none;
    width: 11px;
    height: 11px;
    margin: 0 8px 0 2px;
    appearance: none;
    border: 1px solid #000;
    background: linear-gradient(45deg, transparent 45%, #000 45%, #000 60%, transparent 60%) 0 4px / 5px 5px no-repeat, linear-gradient(-45deg, transparent 42%, #000 42%, #000 60%, transparent 60%) 2px 1px / 7px 7px no-repeat;
}

.tree .symbol {
    padding-left: 78px;
}

.tree .table-node {
    padding-left: 61px;
}

.table-node svg {
    width: 14px;
    height: 12px;
    margin-right: 5px;
}

.table-node span {
    padding: 0 2px;
}

.table-node .selected {
    color: #fff;
    background-color: #0078d7;
}

.tree .caption {
    padding-left: 82px;
}

.tree .field {
    padding-left: 78px;
}

.tree .legend {
    padding-left: 57px;
    font-size: 16px;
}

.swatch {
    width: 14px;
    height: 10px;
    margin-right: 5px;
}

.c1 { background-color: #2892c7; }
.c2 { background-color: #68a6b3; }
.c3 { background-color: #95bda0; }
.c4 { background-color: #bfd488; }
.c5 { background-color: #e6ed71; }
.c6 { background-color: #fce45b; }
.c7 { background-color: #fcb144; }
.c8 { background-color: #fa8532; }
.c9 { background-color: #f2561f; }
.c10 { background-color: #e81014; }

/* Scrollbars */
.scrollbar {
    display: flex;
    background-color: #f0f0f0;
}

.scrollbar button {
    display: flex;
    align-items: center;
    justify-content: center;
    flex: none;
    width: 20px;
    height: 20px;
}

.scrollbar svg {
    width: 10px;
    height: 10px;
}

.scrollbar path {
    fill: none;
    stroke: #555;
    stroke-width: 2;
}

.track {
    flex: 1;
}

.thumb {
    width: 100%;
    height: 100%;
    background-color: #cdcdcd;
}

.toc-box .scrollbar {
    padding: 0 1px 1px 2px;
}

.toc-thumb {
    width: 77%;
}

.vertical {
    flex-direction: column;
    width: 21px;
    border-left: 2px solid #fff;
    border-right: 1px solid #fff;
}

.vertical button {
    width: 18px;
}

/* Map */
.map-pane {
    flex: 1;
    display: flex;
    flex-direction: column;
    min-width: 0;
    margin-left: 7px;
    border-top: 1px solid #6b6b6b;
    border-left: 1px solid #6b6b6b;
}

.map-row {
    flex: 1;
    display: flex;
    min-height: 0;
}

.map-view {
    flex: 1;
    min-width: 0;
    background-color: #fff;
}

.map-view > svg {
    width: 100%;
    height: 100%;
}

.points circle {
    fill: #169b62;
    stroke: #000;
    stroke-width: 2;
}

.k1 { fill: #2892c7; }
.k2 { fill: #68a6b3; }
.k3 { fill: #95bda0; }
.k4 { fill: #bfd488; }
.k5 { fill: #e6ed71; }
.k6 { fill: #fce45b; }
.k7 { fill: #fcb144; }
.k8 { fill: #fa8532; }
.k9 { fill: #f2561f; }

.band-outer {
    stroke: #e6ed71;
    stroke-width: 12;
    stroke-linejoin: round;
}

.band-inner {
    stroke: #bfd488;
    stroke-width: 4;
    stroke-linejoin: round;
}

/* the outer band must not eat into the green fill */
.band-outer,
.band-inner {
    paint-order: stroke;
}

.island {
    fill: #e6ed71;
    stroke: #bfd488;
    stroke-width: 4;
    stroke-linejoin: round;
    paint-order: stroke;
}

.map-footer {
    display: flex;
    align-items: center;
    height: 20px;
    padding-bottom: 1px;
    border-top: 1px solid #fff;
}

.view-button {
    display: flex;
    align-items: center;
    justify-content: center;
    width: 21px;
    height: 18px;
}

.view-button svg {
    width: 9px;
    height: 9px;
}

.view-button.current {
    background-color: #b9d9f3;
}

.footer-line {
    width: 1px;
    height: 18px;
    margin: 0 4px 0 3px;
    background-color: #777;
}

.map-footer .scrollbar {
    flex: 1;
    height: 18px;
    margin-right: 22px;
}

.map-footer .scrollbar button {
    height: 18px;
}

/* Docked tabs */
.dock {
    display: flex;
    flex-direction: column;
    width: 22px;
    margin-left: 4px;
    padding-top: 1px;
}

.dock button {
    display: flex;
    align-items: center;
    gap: 4px;
    width: 23px;
    height: 58px;
    padding-top: 4px;
    border: 1px solid #999;
    border-radius: 4px 0 0 4px;
    color: #555;
    font-size: 15px;
    line-height: 20px;
    writing-mode: vertical-rl;
    text-orientation: sideways;
}

.dock svg {
    width: 16px;
    height: 16px;
}

/* Status bar */
.status-bar {
    display: flex;
    align-items: center;
    justify-content: flex-end;
    gap: 156px;
    height: 26px;
    padding-right: 1px;
}
```
